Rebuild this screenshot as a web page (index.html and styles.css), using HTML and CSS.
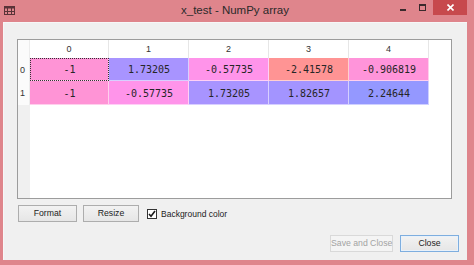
FILE: index.html
```html
<!DOCTYPE html>
<html>
<head>
<meta charset="utf-8">
<link rel="stylesheet" href="styles.css">
</head>
<body>
<div class="window">
  <div class="titlebar">
    <div class="tb-left">
      <svg class="app-icon" width="11" height="9" viewBox="0 0 11 9">
        <rect x="0.5" y="0.5" width="10" height="8" fill="none" stroke="#5a3338" stroke-width="1"/>
        <rect x="0.5" y="0.5" width="10" height="2" fill="#5a3338"/>
        <line x1="0" y1="5.5" x2="11" y2="5.5" stroke="#5a3338"/>
        <line x1="3.5" y1="0" x2="3.5" y2="9" stroke="#5a3338"/>
        <line x1="7.5" y1="0" x2="7.5" y2="9" stroke="#5a3338"/>
      </svg>
    </div>
    <div class="title">x_test - NumPy array</div>
    <div class="tb-right">
      <span class="ctl-min"></span>
      <span class="ctl-max"></span>
      <span class="ctl-close">
        <svg width="7" height="7" viewBox="0 0 7 7"><path d="M0.5 0.5 L6.5 6.5 M6.5 0.5 L0.5 6.5" stroke="#fff" stroke-width="1.6"/></svg>
      </span>
    </div>
  </div>
  <div class="client">
    <div class="table">
      <div class="corner"></div>
      <div class="hh">0</div>
      <div class="hh">1</div>
      <div class="hh">2</div>
      <div class="hh">3</div>
      <div class="hh">4</div>
      <div class="hh-rest"></div>

      <div class="vh">0</div>
      <div class="cell focus" style="background:#ff94d6">-1</div>
      <div class="cell" style="background:#a894ff">1.73205</div>
      <div class="cell" style="background:#ff94ea">-0.57735</div>
      <div class="cell" style="background:#ff9494">-2.41578</div>
      <div class="cell" style="background:#ff94da">-0.906819</div>
      <div class="blank"></div>

      <div class="vh">1</div>
      <div class="cell" style="background:#ff94d6">-1</div>
      <div class="cell" style="background:#ff94ea">-0.57735</div>
      <div class="cell" style="background:#a894ff">1.73205</div>
      <div class="cell" style="background:#a394ff">1.82657</div>
      <div class="cell" style="background:#9498ff">2.24644</div>
      <div class="blank"></div>

      <div class="vh-rest"></div>
      <div class="body-rest"></div>
    </div>
    <div class="toolbar">
      <button class="btn btn-format">Format</button>
      <button class="btn btn-resize">Resize</button>
      <label class="check">
        <span class="box">
          <svg width="8" height="8" viewBox="0 0 8 8"><path d="M1 4 L3 6.3 L7 1" fill="none" stroke="#1a1a1a" stroke-width="1.6"/></svg>
        </span>
        <span class="check-label">Background color</span>
      </label>
    </div>
    <div class="footer">
      <button class="btn btn-save" disabled>Save and Close</button>
      <button class="btn btn-close">Close</button>
    </div>
  </div>
</div>
</body>
</html>
```

FILE: styles.css
```css
html, body {
  margin: 0;
  padding: 0;
}
body {
  width: 474px;
  height: 265px;
  overflow: hidden;
  font-family: "Liberation Sans", Arial, sans-serif;
}
.window {
  width: 474px;
  height: 265px;
  box-sizing: border-box;
  background: #df858c;
  padding: 0 7px 5px 3px;
  display: flex;
  flex-direction: column;
}
.titlebar {
  height: 22px;
  flex: none;
  display: grid;
  grid-template-columns: 1fr auto 1fr;
  align-items: start;
}
.tb-left {
  padding: 6px 0 0 1px;
}
.app-icon {
  display: block;
}
.title {
  font-size: 11.5px;
  line-height: 22px;
  color: #2a2a2a;
  white-space: nowrap;
  margin-top: -1px;
}
.tb-right {
  display: flex;
  justify-content: flex-end;
  align-items: flex-start;
}
.ctl-min {
  width: 6px;
  height: 2px;
  background: #3a2a2c;
  margin-top: 9px;
  margin-right: 13px;
}
.ctl-max {
  width: 5px;
  height: 4px;
  border: 1px solid #3a2a2c;
  border-top-width: 2px;
  margin-top: 4px;
  margin-right: 7px;
}
.ctl-close {
  width: 34px;
  height: 15px;
  background: #c7494d;
  display: flex;
  align-items: center;
  justify-content: center;
}
.ctl-close svg {
  display: block;
}
.client {
  flex: 1;
  background: #f0f0f0;
  padding: 17px 8px 8px 14px;
  display: flex;
  flex-direction: column;
  box-shadow: inset 1px 1px 0 #f7f7f7;
}
.table {
  width: 435px;
  height: 160px;
  box-sizing: border-box;
  border: 1px solid #9c9c9c;
  background: #fff;
  display: grid;
  grid-template-columns: 12px 79px 80px 80px 80px 80px 1fr;
  grid-template-rows: 18px 23px 24px 1fr;
  flex: none;
}
.corner {
  background: #fbfbfb;
  border-right: 1px solid #ececec;
}
.hh {
  background: #fff;
  border-right: 1px solid #e6e6e6;
  font-size: 9px;
  color: #333;
  display: flex;
  align-items: center;
  justify-content: center;
}
.hh-rest {
  background: #fff;
}
.vh {
  background: #fbfbfb;
  font-size: 9px;
  color: #333;
  display: flex;
  align-items: center;
  padding-left: 2px;
  border-right: 1px solid #ececec;
}
.cell {
  font-family: "DejaVu Sans Mono", monospace;
  font-size: 10px;
  color: #262626;
  display: flex;
  align-items: center;
  justify-content: center;
  box-shadow: inset -1px -1px 0 rgba(255,255,255,0.55);
}
.focus {
  outline: 1px dotted #333;
  outline-offset: -1px;
}
.blank {
  background: #fff;
}
.vh-rest {
  background: #f0f0f0;
}
.body-rest {
  grid-column: 2 / -1;
  background: #fff;
}
.toolbar {
  margin-top: 6px;
  height: 17px;
  display: flex;
  align-items: center;
  padding-left: 1px;
}
.btn {
  font-family: "Liberation Sans", Arial, sans-serif;
  font-size: 8.7px;
  color: #222;
  height: 17px;
  box-sizing: border-box;
  border: 1px solid #adadad;
  background: linear-gradient(#f2f2f2, #e6e6e6);
  border-radius: 0;
  padding: 0;
  margin: 0;
  line-height: 15px;
  white-space: nowrap;
}
.btn-format {
  width: 59px;
}
.btn-resize {
  width: 56px;
  margin-left: 6px;
}
.check {
  display: flex;
  align-items: center;
  margin-left: 8px;
  font-size: 8.5px;
  color: #222;
}
.box {
  width: 10px;
  height: 10px;
  box-sizing: border-box;
  border: 1px solid #333;
  background: #fff;
  display: flex;
  align-items: center;
  justify-content: center;
}
.box svg {
  display: block;
}
.check-label {
  margin-left: 4px;
}
.footer {
  margin-top: auto;
  display: flex;
  justify-content: flex-end;
  height: 17px;
}
.btn-save {
  width: 63px;
  color: #a3a3a3;
  border-color: #d9d9d9;
  background: #f4f4f4;
}
.btn-close {
  width: 59px;
  margin-left: 7px;
  border-color: #7eaedf;
  box-shadow: inset 0 0 0 1px #e8f1fa;
}
```
